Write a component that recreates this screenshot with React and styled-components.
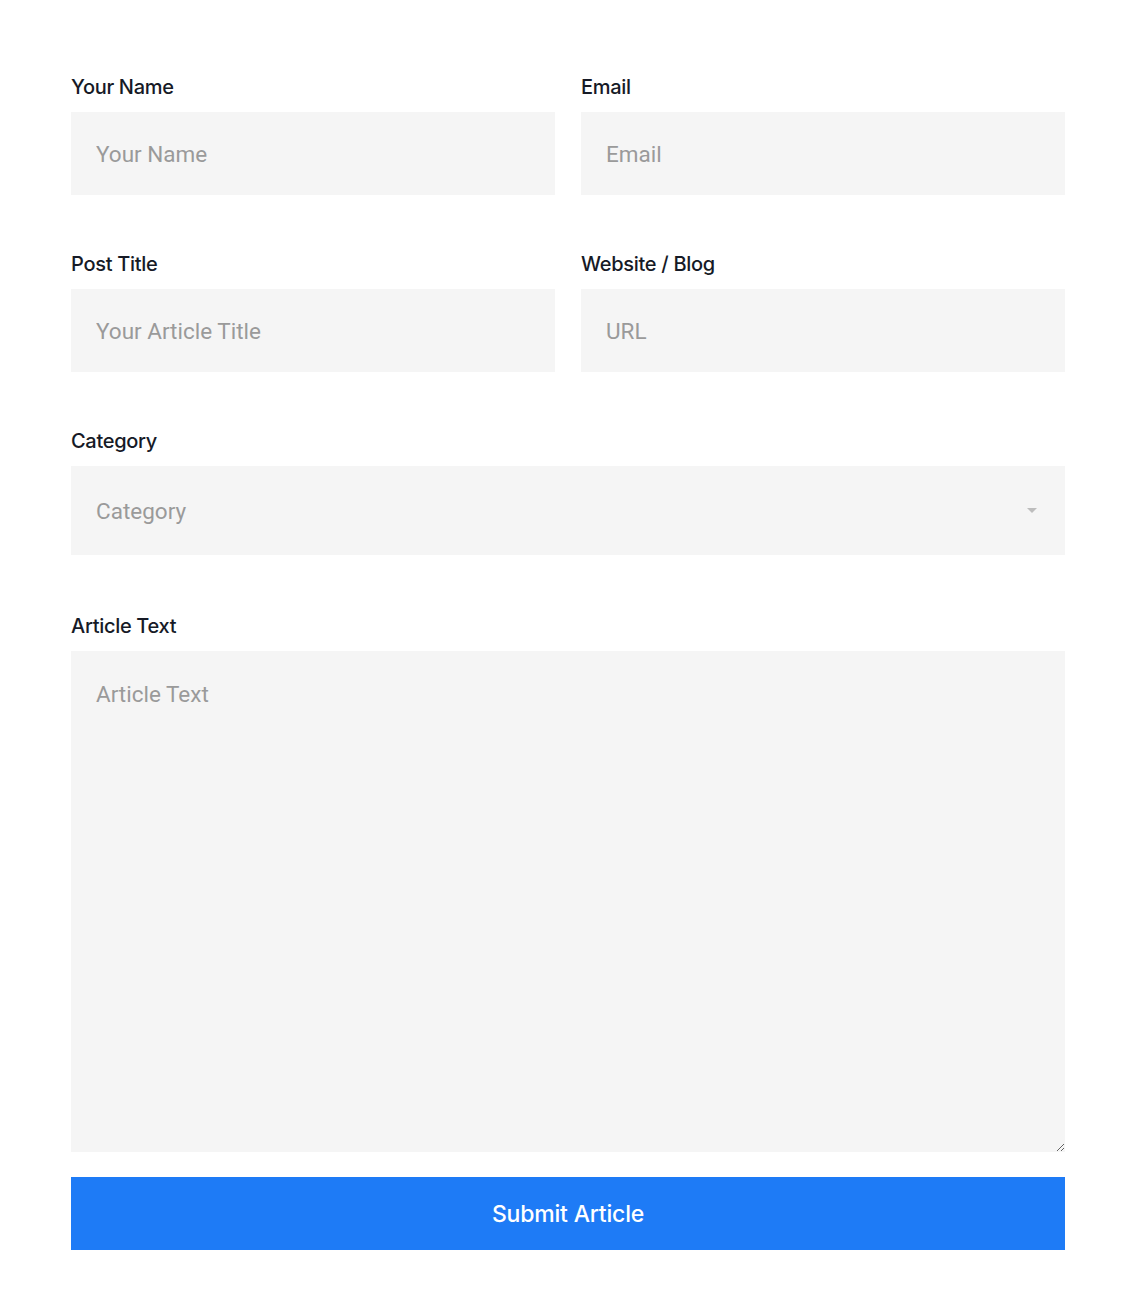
import React from "react";
import styled, { createGlobalStyle } from "styled-components";

const Global = createGlobalStyle`
  html, body { margin: 0; padding: 0; background: #ffffff; }
  * { box-sizing: border-box; }
`;

const Page = styled.div`
  padding: 75px 75px 60px 71px;
  width: 1140px;
`;

const Form = styled.form`
  width: 994px;
  display: flex;
  flex-direction: column;
`;

const Row = styled.div`
  display: grid;
  grid-template-columns: ${(p) => (p.$cols === 2 ? "1fr 1fr" : "1fr")};
  column-gap: 26px;
  margin-bottom: ${(p) => p.$mb ?? 57}px;
`;

const Field = styled.div`
  display: flex;
  flex-direction: column;
  position: relative;
`;

const Label = styled.label`
  font-family: "Inter", "Noto Sans", sans-serif;
  font-size: 20px;
  font-weight: 500;
  letter-spacing: -0.3px;
  line-height: 24px;
  color: #161a26;
  margin-bottom: 13px;
`;

const controlBase = `
  width: 100%;
  border: none;
  outline: none;
  background: #f5f5f5;
  font-family: "Roboto", "Liberation Sans", sans-serif;
  font-size: 22.5px;
  color: #333;
  padding: 0 25px;
  border-radius: 0;
  &::placeholder { color: #9a9a9a; }
`;

const Input = styled.input`
  ${controlBase}
  height: 83px;
`;

const SelectWrap = styled.div`
  position: relative;
`;

const Select = styled.select`
  ${controlBase}
  height: 89px;
  appearance: none;
  color: #9a9a9a;
`;

const Caret = styled.span`
  position: absolute;
  right: 28px;
  top: 42px;
  width: 0;
  height: 0;
  border-left: 5px solid transparent;
  border-right: 5px solid transparent;
  border-top: 5px solid #bdbdbd;
  pointer-events: none;
`;

const TextArea = styled.textarea`
  ${controlBase}
  height: 501px;
  padding: 30px 25px;
  line-height: 26px;
  resize: vertical;
  display: block;
`;

const Button = styled.button`
  height: 73px;
  width: 100%;
  border: none;
  background: #1e7bf6;
  color: #ffffff;
  font-family: "Inter", "Noto Sans", sans-serif;
  font-size: 23px;
  font-weight: 500;
  letter-spacing: -0.2px;
  cursor: pointer;
`;

export default function App() {
  return (
    <>
      <Global />
      <Page>
        <Form onSubmit={(e) => e.preventDefault()}>
          <Row $cols={2}>
            <Field>
              <Label>Your Name</Label>
              <Input placeholder="Your Name" />
            </Field>
            <Field>
              <Label>Email</Label>
              <Input placeholder="Email" />
            </Field>
          </Row>
          <Row $cols={2}>
            <Field>
              <Label>Post Title</Label>
              <Input placeholder="Your Article Title" />
            </Field>
            <Field>
              <Label>Website / Blog</Label>
              <Input placeholder="URL" />
            </Field>
          </Row>
          <Row $mb={59}>
            <Field>
              <Label>Category</Label>
              <SelectWrap>
                <Select defaultValue="">
                  <option value="" disabled>
                    Category
                  </option>
                </Select>
                <Caret />
              </SelectWrap>
            </Field>
          </Row>
          <Row $mb={25}>
            <Field>
              <Label>Article Text</Label>
              <TextArea placeholder="Article Text" />
            </Field>
          </Row>
          <Button type="submit">Submit Article</Button>
        </Form>
      </Page>
    </>
  );
}
